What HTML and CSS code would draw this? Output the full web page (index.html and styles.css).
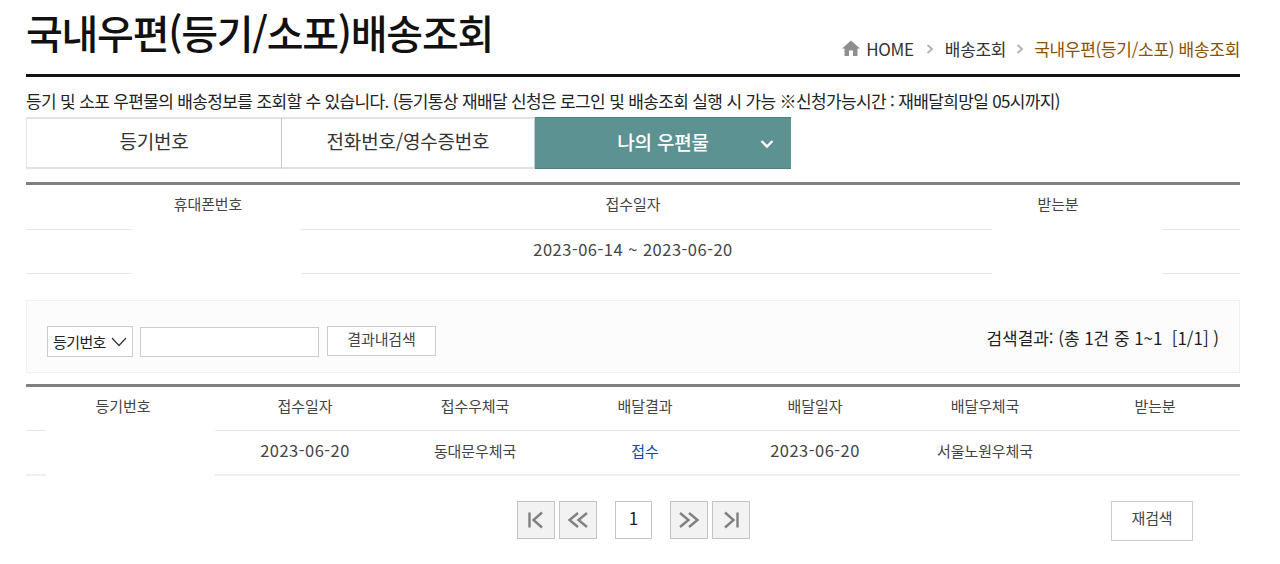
FILE: index.html
```html
<!DOCTYPE html>
<html lang="ko">
<head>
<meta charset="utf-8">
<title>국내우편(등기/소포)배송조회</title>
<link rel="stylesheet" href="styles.css">
</head>
<body>
<main class="page">
  <header class="head">
    <h1 class="title">국내우편(등기/소포)배송조회</h1>
    <nav class="crumbs">
      <svg class="home" viewBox="0 0 18 16" width="18" height="16"><path d="M9 0.5 L18 8.5 H15.5 V16 H11 V10.5 H7 V16 H2.5 V8.5 H0 Z" fill="#8f8f8f"/></svg>
      <span class="crumb-home">HOME</span>
      <svg class="sep sep-a" viewBox="0 0 8 10" width="8" height="10"><path d="M1.5 1 L6 5 L1.5 9" fill="none" stroke="#b5b5b5" stroke-width="2"/></svg>
      <span>배송조회</span>
      <svg class="sep sep-b" viewBox="0 0 8 10" width="8" height="10"><path d="M1.5 1 L6 5 L1.5 9" fill="none" stroke="#b5b5b5" stroke-width="2"/></svg>
      <span class="crumb-now">국내우편(등기/소포) 배송조회</span>
    </nav>
  </header>
  <p class="intro">등기 및 소포 우편물의 배송정보를 조회할 수 있습니다. (등기통상 재배달 신청은 로그인 및 배송조회 실행 시 가능 ※신청가능시간 : 재배달희망일 05시까지)</p>
  <div class="tabs">
    <div class="tab">등기번호</div>
    <div class="tab">전화번호/영수증번호</div>
    <div class="tab tab-on">나의 우편물
      <svg class="tab-arrow" viewBox="0 0 14 10" width="14" height="10"><path d="M1.5 2 L7 7.5 L12.5 2" fill="none" stroke="#fff" stroke-width="2.4"/></svg>
    </div>
  </div>
  <section class="sum">
    <div class="sum-head"><div>휴대폰번호</div><div>접수일자</div><div>받는분</div></div>
    <div class="sum-body"><div></div><div class="date">2023-06-14 ~ 2023-06-20</div><div></div></div>
    <i class="mask mask-a"></i><i class="mask mask-b"></i>
  </section>
  <section class="search">
    <div class="search-left">
      <div class="select">등기번호
        <svg viewBox="0 0 16 10" width="16" height="10"><path d="M1 1 L8 8.5 L15 1" fill="none" stroke="#333" stroke-width="1.2"/></svg>
      </div>
      <div class="input"></div>
      <div class="btn-inner">결과내검색</div>
    </div>
    <div class="count">검색결과: (총 1건 중 1~1 &nbsp;[1/1] )</div>
  </section>
  <section class="res">
    <div class="res-head"><div>등기번호</div><div>접수일자</div><div>접수우체국</div><div>배달결과</div><div>배달일자</div><div>배달우체국</div><div>받는분</div></div>
    <div class="res-body"><div></div><div class="date">2023-06-20</div><div>동대문우체국</div><div class="link">접수</div><div class="date">2023-06-20</div><div>서울노원우체국</div><div></div></div>
    <i class="mask mask-c"></i>
  </section>
  <footer class="foot">
    <div class="pager">
      <div class="pg"><svg viewBox="0 0 20 20" width="20" height="20"><path d="M3.5 2.5 V17.5 M16 2.5 L7.5 10 L16 17.5" fill="none" stroke="#808080" stroke-width="2.4"/></svg></div>
      <div class="pg pg-gap"><svg viewBox="0 0 24 20" width="24" height="20"><path d="M12 3 L3.5 10 L12 17 M21 3 L12.5 10 L21 17" fill="none" stroke="#808080" stroke-width="2.4"/></svg></div>
      <div class="pg pg-num">1</div>
      <div class="pg pg-next"><svg viewBox="0 0 24 20" width="24" height="20"><path d="M3 3 L11.5 10 L3 17 M12 3 L20.5 10 L12 17" fill="none" stroke="#808080" stroke-width="2.4"/></svg></div>
      <div class="pg"><svg viewBox="0 0 20 20" width="20" height="20"><path d="M4 2.5 L12.5 10 L4 17.5 M16.5 2.5 V17.5" fill="none" stroke="#808080" stroke-width="2.4"/></svg></div>
    </div>
    <div class="research">재검색</div>
  </footer>
</main>
</body>
</html>
```
FILE: styles.css
```css
* { box-sizing: border-box; }
html, body { margin: 0; padding: 0; background: #fff; }
body {
  font-family: "Noto Sans CJK KR", "Noto Sans", sans-serif;
  color: #333;
  font-size: 15px;
  overflow: hidden;
}
.page { width: 1214px; margin-left: 26px; height: 564px; }
.head {
  height: 77px;
  border-bottom: 3px solid #111;
  display: flex;
  justify-content: space-between;
  align-items: flex-start;
}
.title {
  margin: 5px 0 0;
  font-size: 40px;
  line-height: 54px;
  font-weight: 500;
  color: #111;
  letter-spacing: -1.25px;
  white-space: nowrap;
}
.crumbs {
  display: flex;
  align-items: center;
  margin-top: 36px;
  height: 24px;
  font-size: 17px;
  letter-spacing: -0.3px;
  color: #333;
  white-space: nowrap;
}
.home { margin-right: 6px; }
.sep { margin: 1px 10px 0 11px; }
.sep-a { margin-left: 12px; margin-right: 11px; }
.sep-b { margin-left: 10px; margin-right: 10px; }
.crumb-now { color: #8a5200; }
.intro {
  margin: 12px 0 0;
  height: 28px;
  font-size: 17px;
  line-height: 24px;
  letter-spacing: -0.65px;
  color: #222;
  white-space: nowrap;
}
.tabs { display: flex; height: 52px; }
.tab {
  width: 256px;
  border: 2px solid #e2e2e2;
  border-left-width: 1px;
  border-right: 1px solid #c8c8c8;
  display: flex;
  align-items: center;
  justify-content: center;
  font-size: 19px;
  letter-spacing: -0.2px;
  color: #333;
  padding-bottom: 6px;
}
.tab + .tab { border-left: 0; width: 253px; }
.tab-on {
  position: relative;
  width: 256px !important;
  background: #5c9292;
  border: 0;
  border-top: 1px solid #4c8282;
  border-bottom: 1px solid #4c8282;
  color: #fff;
  font-weight: 500;
  padding-bottom: 4px;
}
.tab-arrow { position: absolute; right: 17px; top: 21px; }
.sum { position: relative; margin-top: 13px; border-top: 3px solid #808080; }
.sum-head, .sum-body { display: grid; grid-template-columns: 364px 486px 364px; text-align: center; }
.sum-head { height: 45px; line-height: 38px; border-bottom: 1px solid #e8e8e8; font-size: 15px; letter-spacing: -0.1px; color: #444; }
.sum-body { height: 44px; line-height: 39px; border-bottom: 1px solid #e8e8e8; font-size: 15px; color: #444; }
.date { font-size: 16.5px; letter-spacing: 0.5px; }
.mask { position: absolute; background: #fff; display: block; }
.mask-a { left: 106px; width: 169px; top: 40px; height: 52px; }
.mask-b { left: 966px; width: 170px; top: 40px; height: 52px; }
.search {
  margin-top: 26px;
  height: 73px;
  background: #fcfcfc;
  border: 1px solid #f0f0f0;
  display: flex;
  justify-content: space-between;
  align-items: flex-start;
  padding: 25px 20px 0 20px;
}
.search-left { display: flex; align-items: flex-start; }
.select {
  width: 86px;
  height: 31px;
  background: #fff;
  border: 1px solid #ccc;
  font-size: 15px;
  letter-spacing: -0.6px;
  color: #222;
  display: flex;
  align-items: center;
  justify-content: space-between;
  padding: 0 5px 0 5px;
  white-space: nowrap;
}
.input { width: 179px; height: 30px; margin: 1px 0 0 7px; background: #fff; border: 1px solid #ccc; }
.btn-inner {
  width: 109px;
  height: 30px;
  margin-left: 8px;
  background: #fff;
  border: 1px solid #ccc;
  text-align: center;
  font-size: 15px;
  line-height: 23px;
  letter-spacing: -0.1px;
  color: #444;
}
.count { font-size: 17px; line-height: 24px; letter-spacing: -0.05px; color: #222; white-space: nowrap; }
.res { position: relative; margin-top: 11px; border-top: 3px solid #808080; }
.res-head, .res-body { display: grid; grid-template-columns: 194px repeat(6, 170px); text-align: center; }
.res-head { height: 44px; line-height: 38px; border-bottom: 1px solid #e8e8e8; font-size: 15px; letter-spacing: -0.1px; color: #444; }
.res-body { height: 45px; line-height: 39px; border-bottom: 2px solid #eee; font-size: 15px; letter-spacing: -0.1px; color: #444; }
.link { color: #0a4ea8; }
.mask-c { left: 20px; width: 169px; top: 40px; height: 53px; }
.foot { display: flex; margin-top: 25px; position: relative; }
.pager { display: flex; margin-left: 491px; }
.pg {
  width: 38px;
  height: 38px;
  background: #f2f2f2;
  border: 1px solid #c4c4c4;
  display: flex;
  align-items: center;
  justify-content: center;
  margin-right: 4px;
}
.pg-num { width: 37px; background: #fff; margin-left: 14px; margin-right: 18px; font-size: 17px; color: #222; padding-bottom: 6px; }
.research {
  width: 82px;
  height: 40px;
  margin-left: 357px;
  border: 1px solid #ccc;
  text-align: center;
  font-size: 15px;
  line-height: 32px;
  letter-spacing: -0.1px;
  color: #444;
}
```
